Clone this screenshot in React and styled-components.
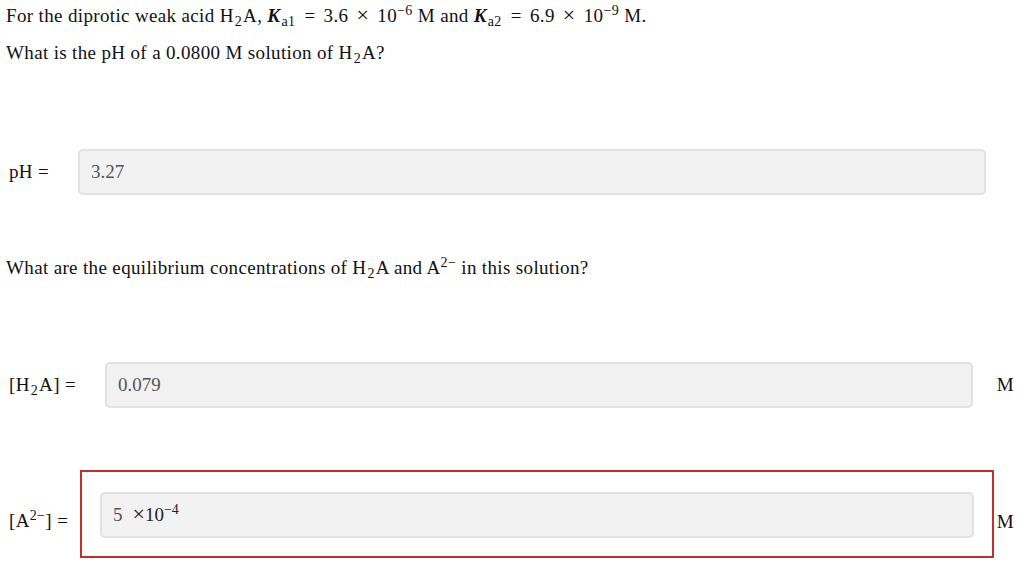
import React from 'react';
import styled, { createGlobalStyle } from 'styled-components';

const Global = createGlobalStyle`
  body {
    margin: 0;
    background: #fff;
    font-family: "Liberation Serif", "Times New Roman", serif;
    font-size: 19px;
    letter-spacing: 0.35px;
    color: #111;
  }
`;

const Page = styled.div`
  padding: 5px 10px 0 6px;
`;

const Question = styled.p`
  margin: 0;
  margin-top: ${(p) => p.$top || 0}px;
  line-height: 22px;
`;

const Sub = styled.sub`
  font-size: 14px;
  line-height: 0;
  vertical-align: -4px;
  margin: 0 1px;
`;

const Sup = styled.sup`
  font-size: 14px;
  line-height: 0;
  vertical-align: 7px;
`;

const K = styled.i`
  font-weight: bold;
`;

const Op = styled.span`
  margin: 0 3px;
  font-size: ${(p) => (p.$big ? 22 : 19)}px;
  line-height: 0;
`;

const Row = styled.div`
  display: flex;
  align-items: center;
  margin-top: ${(p) => p.$top}px;
  margin-right: ${(p) => p.$right || 0}px;
`;

const Label = styled.div`
  padding-left: 3px;
  width: ${(p) => p.$w}px;
  flex-shrink: 0;
  padding-top: ${(p) => p.$drop || 0}px;
  white-space: nowrap;
`;

const Input = styled.div`
  flex: 1;
  height: 46px;
  box-sizing: border-box;
  display: flex;
  align-items: center;
  padding-left: 11px;
  background: #f2f2f2;
  border: 2px solid #e2e2e2;
  border-radius: 5px;
  color: #555;
  letter-spacing: 0;
`;

const Unit = styled.div`
  padding-left: ${(p) => p.$gap}px;
  padding-top: ${(p) => p.$drop || 0}px;
  flex-shrink: 0;
`;

const Flagged = styled.div`
  flex: 1;
  border: 2px solid #c62d2d;
  padding: 20px 18px 18px 18px;
`;

const Times = styled.span`
  color: #222;
  margin-left: 10px;
`;

const Cross = styled.span`
  font-size: 22px;
  line-height: 0;
`;

export default function App() {
  return (
    <Page>
      <Global />
      <Question>
        For the diprotic weak acid H<Sub>2</Sub>A, <K>K</K>
        <Sub>a1</Sub> <Op>=</Op> 3.6 <Op $big>×</Op> 10<Sup>−6</Sup> M and <K>K</K>
        <Sub>a2</Sub> <Op>=</Op> 6.9 <Op $big>×</Op> 10<Sup>−9</Sup> M.
      </Question>
      <Question $top={15}>
        What is the pH of a 0.0800 M solution of H<Sub>2</Sub>A?
      </Question>

      <Row $top={85} $right={28}>
        <Label $w={69}>pH =</Label>
        <Input>3.27</Input>
      </Row>

      <Question $top={62}>
        What are the equilibrium concentrations of H<Sub>2</Sub>A and A<Sup>2−</Sup> in this solution?
      </Question>

      <Row $top={83}>
        <Label $w={96}>
          [H<Sub>2</Sub>A] =
        </Label>
        <Input>0.079</Input>
        <Unit $gap={24}>M</Unit>
      </Row>

      <Row $top={62}>
        <Label $w={71} $drop={14}>
          [A<Sup>2−</Sup>] =
        </Label>
        <Flagged>
          <Input>
            5<Times><Cross>×</Cross>10<Sup>−4</Sup></Times>
          </Input>
        </Flagged>
        <Unit $gap={3} $drop={16}>M</Unit>
      </Row>
    </Page>
  );
}
